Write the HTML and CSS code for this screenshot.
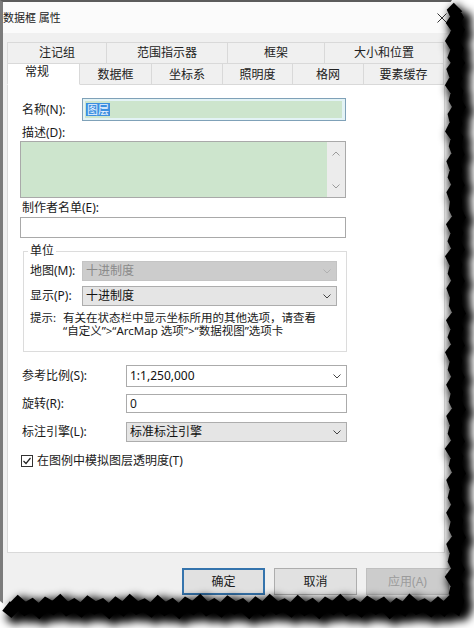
FILE: index.html
```html
<!DOCTYPE html>
<html lang="zh-CN">
<head>
<meta charset="utf-8">
<title>数据框 属性</title>
<link rel="stylesheet" href="styles.css">
</head>
<body>
<div class="frame">
  <div class="dialog">
    <div class="titlebar">
      <span class="title">数据框 属性</span>
      <svg class="close" viewBox="0 0 10 10"><path d="M0.5 0.5 L9.5 9.5 M9.5 0.5 L0.5 9.5" stroke="#333" stroke-width="1" fill="none"/></svg>
    </div>
    <div class="main">
      <div class="tabrow row1">
        <div class="tab w100">注记组</div>
        <div class="tab w121">范围指示器</div>
        <div class="tab w97">框架</div>
        <div class="tab w119">大小和位置</div>
      </div>
      <div class="tabrow row2">
        <div class="tab active w73">常规</div>
        <div class="tab w72">数据框</div>
        <div class="tab w71">坐标系</div>
        <div class="tab w70">照明度</div>
        <div class="tab w71">格网</div>
        <div class="tab w80">要素缓存</div>
      </div>
      <div class="panel">
        <div class="row r-name">
          <span class="lbl w-name">名称(N):</span>
          <div class="namebox"><div class="fill"><span class="sel">图层</span></div></div>
        </div>
        <div class="caption c-desc">描述(D):</div>
        <div class="textarea">
          <div class="scroll">
            <svg class="chev" viewBox="0 0 8 5"><path d="M0.5 4.5 L4 1 L7.5 4.5" stroke="#9a9a9a" fill="none"/></svg>
            <svg class="chev" viewBox="0 0 8 5"><path d="M0.5 0.5 L4 4 L7.5 0.5" stroke="#9a9a9a" fill="none"/></svg>
          </div>
        </div>
        <div class="caption c-author">制作者名单(E):</div>
        <div class="authorbox"></div>
        <fieldset class="units">
          <legend>单位</legend>
          <div class="row urow u-map">
            <span class="lbl w-unit">地图(M):</span>
            <div class="select sel-dis w-usel">
              <span>十进制度</span>
              <svg class="chev" viewBox="0 0 8 5"><path d="M0.5 0.5 L4 4 L7.5 0.5" stroke="#b0b0b0" fill="none"/></svg>
            </div>
          </div>
          <div class="row urow u-disp">
            <span class="lbl w-unit">显示(P):</span>
            <div class="select sel-gray w-usel">
              <span>十进制度</span>
              <svg class="chev" viewBox="0 0 8 5"><path d="M0.5 0.5 L4 4 L7.5 0.5" stroke="#444" fill="none"/></svg>
            </div>
          </div>
          <div class="tip">
            <span class="tip-h">提示:</span>
            <div class="tip-t">
              <div class="tip-line">有关在状态栏中显示坐标所用的其他选项，请查看</div>
              <div class="tip-line">“自定义”&gt;“ArcMap 选项”&gt;“数据视图”选项卡</div>
            </div>
          </div>
        </fieldset>
        <div class="row r-scale">
          <span class="lbl w-long">参考比例(S):</span>
          <div class="select sel-white w-lsel h22">
            <span>1:1,250,000</span>
            <svg class="chev" viewBox="0 0 8 5"><path d="M0.5 0.5 L4 4 L7.5 0.5" stroke="#444" fill="none"/></svg>
          </div>
        </div>
        <div class="row r-rot">
          <span class="lbl w-long">旋转(R):</span>
          <div class="input w-lsel h19"><span>0</span></div>
        </div>
        <div class="row r-eng">
          <span class="lbl w-long">标注引擎(L):</span>
          <div class="select sel-gray w-lsel h20">
            <span>标准标注引擎</span>
            <svg class="chev" viewBox="0 0 8 5"><path d="M0.5 0.5 L4 4 L7.5 0.5" stroke="#444" fill="none"/></svg>
          </div>
        </div>
        <div class="row r-check">
          <svg class="cbox" viewBox="0 0 12 12"><rect x="0.5" y="0.5" width="11" height="11" fill="#fff" stroke="#333"/><path d="M2.5 6 L5 8.5 L9.5 3" stroke="#222" stroke-width="1.2" fill="none"/></svg>
          <span class="ctext">在图例中模拟图层透明度(T)</span>
        </div>
      </div>
      <div class="footer">
        <div class="btn default">确定</div>
        <div class="btn">取消</div>
        <div class="btn disabled">应用(A)</div>
      </div>
    </div>
  </div>
  <svg class="torn" viewBox="0 0 474 628" width="474" height="628">
    <defs>
      <filter id="soft" x="-10%" y="-10%" width="130%" height="130%"><feGaussianBlur stdDeviation="4"/></filter>
    </defs>
    <path fill="#fff" d="M474,0 L452,0 448,6 451,12 447,18 452,25 449,31 446,36 451,44 448,52 452,58 447,65 450,73 446,80 451,87 449,95 453,102 448,110 450,118 446,126 451,133 449,141 452,149 447,157 450,165 448,172 452,180 447,188 450,196 449,204 453,212 447,220 451,228 448,236 452,244 446,252 450,260 448,268 452,276 447,284 450,292 449,300 453,308 447,316 451,324 448,332 452,340 446,348 450,356 448,364 452,372 447,380 451,388 449,396 453,404 447,412 450,420 448,428 452,436 446,444 451,452 449,460 453,468 447,476 450,484 448,492 452,500 447,508 451,516 449,524 453,532 447,540 450,548 448,556 452,564 446,572 451,580 449,588 452,596 450,602 444,598 438,604 432,599 425,605 418,600 411,603 404,597 398,604 391,600 384,606 377,599 370,603 362,598 355,605 348,600 341,604 334,597 327,603 320,599 313,606 306,600 299,604 292,598 285,605 278,600 271,603 264,597 257,604 250,599 243,606 236,600 229,603 222,598 215,605 208,600 201,604 194,597 187,603 180,599 173,606 166,600 159,604 152,598 145,605 138,600 131,603 124,597 117,604 110,599 103,606 96,600 89,603 82,598 75,605 68,600 61,604 54,597 47,603 40,599 33,606 26,600 19,604 12,598 5,605 0,601 L0,628 L474,628 Z"/>
    <polyline class="shade" filter="url(#soft)" transform="translate(11,9)" points="452,4 448,6 451,12 447,18 452,25 449,31 446,36 451,44 448,52 452,58 447,65 450,73 446,80 451,87 449,95 453,102 448,110 450,118 446,126 451,133 449,141 452,149 447,157 450,165 448,172 452,180 447,188 450,196 449,204 453,212 447,220 451,228 448,236 452,244 446,252 450,260 448,268 452,276 447,284 450,292 449,300 453,308 447,316 451,324 448,332 452,340 446,348 450,356 448,364 452,372 447,380 451,388 449,396 453,404 447,412 450,420 448,428 452,436 446,444 451,452 449,460 453,468 447,476 450,484 448,492 452,500 447,508 451,516 449,524 453,532 447,540 450,548 448,556 452,564 446,572 451,580 449,588 452,596 450,602 444,598 438,604 432,599 425,605 418,600 411,603 404,597 398,604 391,600 384,606 377,599 370,603 362,598 355,605 348,600 341,604 334,597 327,603 320,599 313,606 306,600 299,604 292,598 285,605 278,600 271,603 264,597 257,604 250,599 243,606 236,600 229,603 222,598 215,605 208,600 201,604 194,597 187,603 180,599 173,606 166,600 159,604 152,598 145,605 138,600 131,603 124,597 117,604 110,599 103,606 96,600 89,603 82,598 75,605 68,600 61,604 54,597 47,603 40,599 33,606 26,600 19,604 12,598 5,605 0,601"/>
    <polyline class="edge" transform="translate(6,5)" points="452,2 448,6 451,12 447,18 452,25 449,31 446,36 451,44 448,52 452,58 447,65 450,73 446,80 451,87 449,95 453,102 448,110 450,118 446,126 451,133 449,141 452,149 447,157 450,165 448,172 452,180 447,188 450,196 449,204 453,212 447,220 451,228 448,236 452,244 446,252 450,260 448,268 452,276 447,284 450,292 449,300 453,308 447,316 451,324 448,332 452,340 446,348 450,356 448,364 452,372 447,380 451,388 449,396 453,404 447,412 450,420 448,428 452,436 446,444 451,452 449,460 453,468 447,476 450,484 448,492 452,500 447,508 451,516 449,524 453,532 447,540 450,548 448,556 452,564 446,572 451,580 449,588 452,596 450,602 444,598 438,604 432,599 425,605 418,600 411,603 404,597 398,604 391,600 384,606 377,599 370,603 362,598 355,605 348,600 341,604 334,597 327,603 320,599 313,606 306,600 299,604 292,598 285,605 278,600 271,603 264,597 257,604 250,599 243,606 236,600 229,603 222,598 215,605 208,600 201,604 194,597 187,603 180,599 173,606 166,600 159,604 152,598 145,605 138,600 131,603 124,597 117,604 110,599 103,606 96,600 89,603 82,598 75,605 68,600 61,604 54,597 47,603 40,599 33,606 26,600 19,604 12,598 5,605 0,601"/>
  </svg>
</div>
</body>
</html>
```

FILE: styles.css
```css
* { box-sizing: border-box; }

body {
  margin: 0;
  background: #fff;
  font-family: "Noto Sans", "Noto Sans CJK SC", sans-serif;
  font-size: 12px;
  color: #1a1a1a;
}

.frame {
  position: relative;
  width: 474px;
  height: 628px;
  overflow: hidden;
  background: #fff;
}

.dialog {
  width: 457px;
  height: 612px;
  border-left: 3px solid #7b7b7b;
  border-top: 2px solid #5c5c5c;
  background: #f0f0f0;
  display: flex;
  flex-direction: column;
}

.titlebar {
  height: 31px;
  flex: none;
  background: #fbfbfb;
  display: flex;
  align-items: center;
  justify-content: space-between;
  padding-right: 10px;
}

.title {
  font-size: 11px;
  line-height: 14px;
  color: #222;
}

.close { width: 10px; height: 10px; display: block; }

.main { padding: 9px 0 0 4px; }

.tabrow { display: flex; width: 437px; }
.row1 { height: 21px; }
.row2 { height: 22px; }

.tab {
  border-top: 1px solid #d9d9d9;
  border-right: 1px solid #d9d9d9;
  display: flex;
  align-items: center;
  justify-content: center;
  font-size: 12px;
  line-height: 16px;
  color: #222;
}
.tab:first-child { border-left: 1px solid #d9d9d9; }
.row2 .tab { border-bottom: 1px solid #d9d9d9; padding-top: 2px; }
.row2 .tab.active {
  background: #fff;
  border-bottom-color: #fff;
  justify-content: flex-start;
  align-items: flex-start;
  padding: 0 0 0 17px;
}

.w100 { width: 100px; }
.w121 { width: 121px; }
.w97 { width: 97px; }
.w119 { width: 119px; }
.w73 { width: 73px; }
.w72 { width: 72px; }
.w71 { width: 71px; }
.w70 { width: 70px; }
.w80 { width: 80px; }

.panel {
  width: 438px;
  height: 468px;
  background: #fff;
  border: 1px solid #d9d9d9;
  border-top: none;
  padding-left: 12px;
  display: flex;
  flex-direction: column;
}

.row { display: flex; align-items: center; flex: none; }
.lbl { padding-left: 2px; line-height: 14px; flex: none; }

.r-name { margin-top: 13px; height: 23px; }
.w-name { width: 62px; }

.namebox {
  width: 264px;
  height: 23px;
  border: 1px solid #7fa1b8;
  background: #e3f3f5;
  padding: 2px 3px 2px 2px;
}
.namebox .fill {
  height: 100%;
  background: #cde5cd;
  display: flex;
  align-items: center;
  padding-left: 1px;
}
.sel {
  background: #3b8fe0;
  color: #eef5ff;
  font-size: 11px;
  line-height: 13px;
  padding: 0 1px;
}

.caption { padding-left: 2px; line-height: 14px; height: 14px; flex: none; }
.c-desc { margin-top: 5px; }
.c-author { margin-top: 3px; }

.textarea {
  margin-top: 1px;
  width: 326px;
  height: 57px;
  flex: none;
  border: 1px solid #a9a9a9;
  background: #cde5cd;
  display: flex;
  justify-content: flex-end;
}
.scroll {
  width: 18px;
  background: #ececec;
  display: flex;
  flex-direction: column;
  justify-content: space-between;
  align-items: center;
  padding: 9px 0 8px;
}

.chev { width: 8px; height: 5px; display: block; flex: none; }

.authorbox {
  margin-top: 2px;
  width: 326px;
  height: 21px;
  flex: none;
  border: 1px solid #a9a9a9;
  background: #fff;
}

.units {
  margin: 7px 0 0 3px;
  width: 324px;
  flex: none;
  border: 1px solid #dcdcdc;
  padding: 0 0 14px 4px;
  min-width: 0;
}
.units legend {
  padding: 0 2px;
  font-size: 12px;
  line-height: 12px;
}

.urow { height: 20px; }
.u-map { margin-top: 4px; }
.u-disp { margin-top: 5px; }
.w-unit { width: 54px; }
.w-usel { width: 255px; height: 20px; }

.select {
  display: flex;
  align-items: center;
  justify-content: space-between;
  padding: 0 5px 0 3px;
  border: 1px solid #adadad;
  line-height: 14px;
}
.sel-dis { background: #cccccc; border-color: #c4c4c4; color: #8a8a8a; }
.sel-gray { background: #e5e5e5; border-color: #adadad; color: #111; }
.sel-white { background: #fff; border-color: #ababab; color: #111; }

.input {
  display: flex;
  align-items: center;
  padding-left: 3px;
  border: 1px solid #ababab;
  background: #fff;
  line-height: 14px;
}

.tip { display: flex; margin-top: 5px; line-height: 13px; font-size: 11.5px; }
.tip-h { width: 35px; padding-left: 2px; flex: none; }
.tip-t { white-space: nowrap; }
.tip-line { height: 13px; }

.w-long { width: 106px; }
.w-lsel { width: 221px; }
.h22 { height: 22px; }
.h20 { height: 20px; }
.h19 { height: 19px; }

.r-scale { margin-top: 13px; height: 22px; }
.r-rot { margin-top: 7px; height: 19px; }
.r-eng { margin-top: 9px; height: 20px; }
.r-check { margin-top: 12px; height: 14px; }

.cbox { width: 12px; height: 12px; margin-left: 1px; display: block; flex: none; }
.ctext { margin-left: 4px; line-height: 14px; }

.footer {
  display: flex;
  justify-content: flex-end;
  gap: 9px;
  padding: 15px 8px 0 0;
}

.btn {
  width: 83px;
  height: 27px;
  display: flex;
  align-items: center;
  justify-content: center;
  background: #e1e1e1;
  border: 1px solid #adadad;
  font-size: 12px;
  line-height: 14px;
  color: #1a1a1a;
}
.btn.default { border: 2px solid #3574ad; }
.btn.disabled { background: #cccccc; border-color: #bfbfbf; color: #9b9b9b; }

.torn {
  position: absolute;
  left: 0;
  top: 0;
  pointer-events: none;
}
.shade { fill: none; stroke: #000; stroke-width: 20; stroke-linejoin: round; }
.edge { fill: none; stroke: #000; stroke-width: 12; stroke-linejoin: miter; }
```
